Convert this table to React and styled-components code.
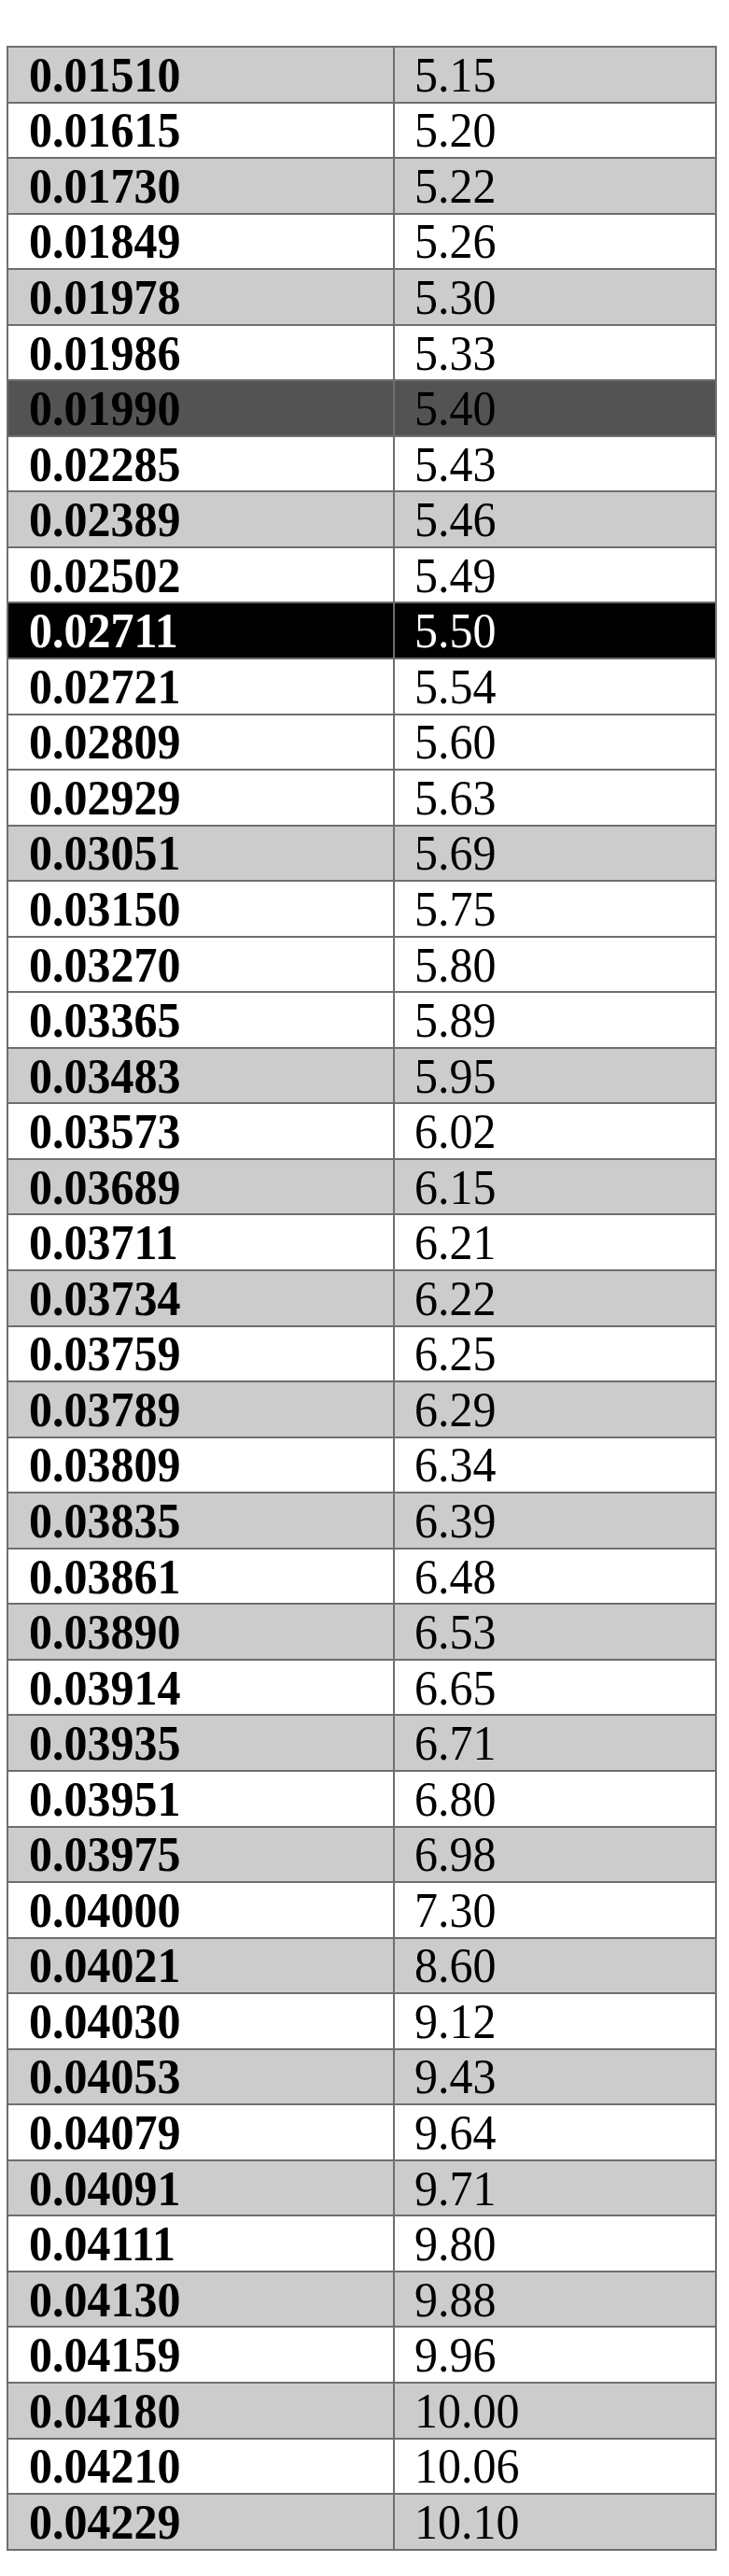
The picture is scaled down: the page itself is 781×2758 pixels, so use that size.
import React from "react";
import styled, { createGlobalStyle } from "styled-components";

const GlobalStyle = createGlobalStyle`
  html, body { margin: 0; padding: 0; background: #ffffff; }
  body { font-family: "Liberation Serif", "Times New Roman", serif; }
`;

const Page = styled.div`
  padding: 49px 0 27px 7px;
`;

const Table = styled.div`
  width: 761px;
  border: 2px solid #6e6e6e;
  box-sizing: border-box;
  display: flex;
  flex-direction: column;
`;

const bg = { gray: "#cccccc", white: "#ffffff", dark: "#535353", black: "#000000" };

const Row = styled.div`
  display: grid;
  grid-template-columns: 412px 2px 1fr;
  height: 57.56px;
  background: ${(p) => bg[p.$tone]};
  color: ${(p) => (p.$tone === "black" ? "#ffffff" : "#000000")};
  & + & { border-top: 2px solid #6e6e6e; }
`;

const Divider = styled.div`
  background: #6e6e6e;
`;

const Cell = styled.div`
  display: flex;
  align-items: center;
  padding: 0 0 0 ${(p) => (p.$bold ? 22 : 21)}px;
  font-size: 50px;
  font-weight: ${(p) => (p.$bold ? 700 : 400)};
  white-space: nowrap;
`;

const Value = styled.span`
  display: inline-block;
  line-height: 50px;
  transform: scaleY(1.07);
  transform-origin: 50% 50%;
`;

const rows = [
  ["0.01510", "5.15", "gray"],
  ["0.01615", "5.20", "white"],
  ["0.01730", "5.22", "gray"],
  ["0.01849", "5.26", "white"],
  ["0.01978", "5.30", "gray"],
  ["0.01986", "5.33", "white"],
  ["0.01990", "5.40", "dark"],
  ["0.02285", "5.43", "white"],
  ["0.02389", "5.46", "gray"],
  ["0.02502", "5.49", "white"],
  ["0.02711", "5.50", "black"],
  ["0.02721", "5.54", "white"],
  ["0.02809", "5.60", "white"],
  ["0.02929", "5.63", "white"],
  ["0.03051", "5.69", "gray"],
  ["0.03150", "5.75", "white"],
  ["0.03270", "5.80", "white"],
  ["0.03365", "5.89", "white"],
  ["0.03483", "5.95", "gray"],
  ["0.03573", "6.02", "white"],
  ["0.03689", "6.15", "gray"],
  ["0.03711", "6.21", "white"],
  ["0.03734", "6.22", "gray"],
  ["0.03759", "6.25", "white"],
  ["0.03789", "6.29", "gray"],
  ["0.03809", "6.34", "white"],
  ["0.03835", "6.39", "gray"],
  ["0.03861", "6.48", "white"],
  ["0.03890", "6.53", "gray"],
  ["0.03914", "6.65", "white"],
  ["0.03935", "6.71", "gray"],
  ["0.03951", "6.80", "white"],
  ["0.03975", "6.98", "gray"],
  ["0.04000", "7.30", "white"],
  ["0.04021", "8.60", "gray"],
  ["0.04030", "9.12", "white"],
  ["0.04053", "9.43", "gray"],
  ["0.04079", "9.64", "white"],
  ["0.04091", "9.71", "gray"],
  ["0.04111", "9.80", "white"],
  ["0.04130", "9.88", "gray"],
  ["0.04159", "9.96", "white"],
  ["0.04180", "10.00", "gray"],
  ["0.04210", "10.06", "white"],
  ["0.04229", "10.10", "gray"],
];

export default function App() {
  return (
    <>
      <GlobalStyle />
      <Page>
        <Table>
          {rows.map(([a, b, tone]) => (
            <Row key={a} $tone={tone}>
              <Cell $bold>
                <Value>{a}</Value>
              </Cell>
              <Divider />
              <Cell>
                <Value>{b}</Value>
              </Cell>
            </Row>
          ))}
        </Table>
      </Page>
    </>
  );
}
